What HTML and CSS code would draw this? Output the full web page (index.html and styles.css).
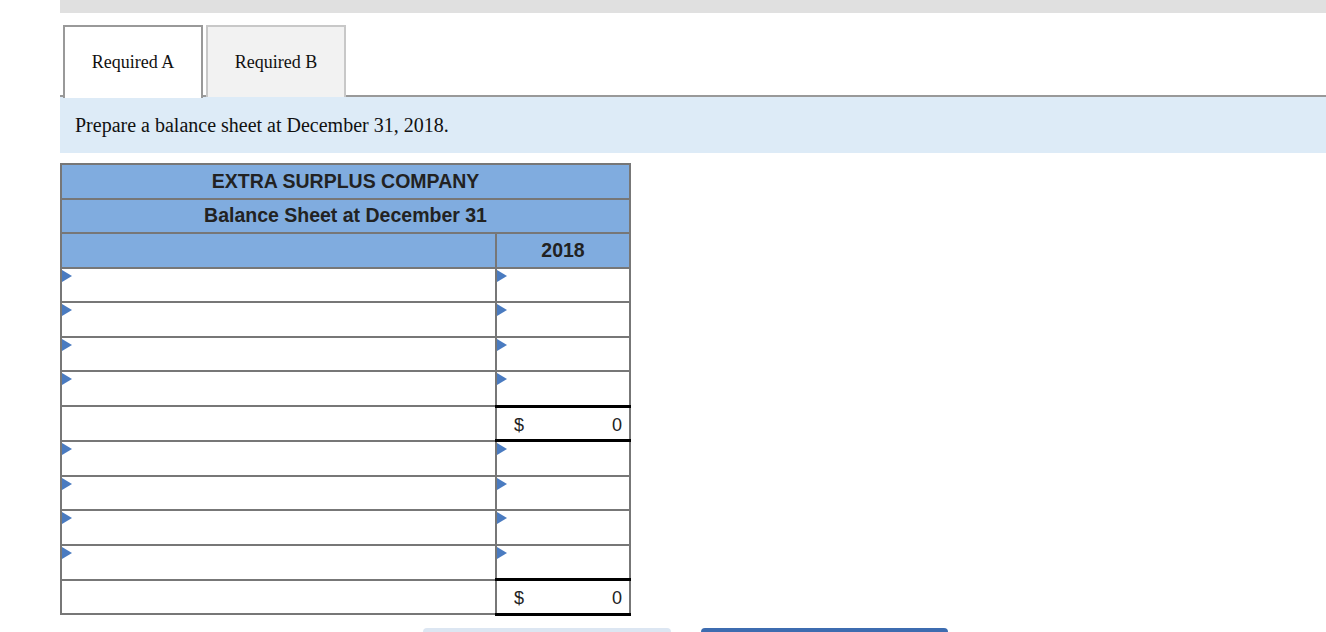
FILE: index.html
```html
<!DOCTYPE html>
<html>
<head>
<title>Balance Sheet</title>
<link rel="stylesheet" href="styles.css">
</head>
<body>

<div class="topbar"></div>

<div class="tabs">
	<div class="tab active">Required A</div>
	<div class="tab">Required B</div>
</div>

<div class="instr">Prepare a balance sheet at December 31, 2018.</div>

<table class="sheet">
<colgroup><col class="c1"><col class="c2"></colgroup>
<tr class="head"><td colspan="2">EXTRA SURPLUS COMPANY</td></tr>
<tr class="head"><td colspan="2">Balance Sheet at December 31</td></tr>
<tr class="head"><td></td><td class="yr">2018</td></tr>

<tr><td><span class="tri"></span></td><td><span class="tri"></span></td></tr>
<tr><td><span class="tri"></span></td><td><span class="tri"></span></td></tr>
<tr><td><span class="tri"></span></td><td><span class="tri"></span></td></tr>
<tr><td><span class="tri"></span></td><td><span class="tri"></span></td></tr>
<tr><td></td><td class="total"><span class="cur">$</span><span class="val">0</span></td></tr>
<tr><td><span class="tri"></span></td><td><span class="tri"></span></td></tr>
<tr><td><span class="tri"></span></td><td><span class="tri"></span></td></tr>
<tr><td><span class="tri"></span></td><td><span class="tri"></span></td></tr>
<tr><td><span class="tri"></span></td><td><span class="tri"></span></td></tr>
<tr><td></td><td class="total"><span class="cur">$</span><span class="val">0</span></td></tr>
</table>

<div class="nav">
	<button class="prev"></button>
	<button class="next"></button>
</div>

</body>
</html>
```

FILE: styles.css
```css
body { margin: 0; padding-left: 60px; background: #fff; font-family: "Liberation Serif", "Times New Roman", serif; overflow: hidden; }

.topbar { height: 13px; background-color: #e0e0e0; }

.tabs { display: flex; gap: 3px; margin-top: 12px; padding-left: 3px; border-bottom: 2px solid #999; height: 70px; }
.tab { width: 136px; height: 70px; border: 2px solid #c8c8c8; border-bottom: none;
	   background-color: #f2f2f2; font-size: 18px; color: #111;
	   display: flex; align-items: center; justify-content: center; box-sizing: content-box; }
.tab.active { background-color: #fff; border-color: #999; height: 71px; position: relative; z-index: 1; }

.instr { background-color: #ddebf7; height: 56px; padding-left: 15px; font-size: 20px; color: #111;
		 display: flex; align-items: center; padding-top: 1px; box-sizing: border-box; }

table.sheet { margin-top: 10px; border-collapse: collapse; table-layout: fixed; width: 569px;
			  font-family: "Liberation Sans", Arial, sans-serif; color: #222; }
col.c1 { width: 435px; }
col.c2 { width: 134px; }
table.sheet td { border: 2px solid #777; height: 32.5px; padding: 0; position: relative; }
tr.head td { background-color: #80acdf; text-align: center; font-weight: bold; font-size: 19.5px; }
td.yr { padding-top: 2px; }

table.sheet td.total { border-top: 3px solid #000; border-bottom: 3px solid #000; font-size: 18px; height: 31.5px; }
.cur { position: absolute; left: 17px; top: 7px; }
.val { position: absolute; right: 7px; top: 7px; }

.tri { position: absolute; left: 0; top: 1px; width: 0; height: 0;
	   border-left: 10px solid #4a7bc0; border-top: 6px solid transparent; border-bottom: 6px solid transparent; }

.nav { display: flex; gap: 30px; margin-top: 12px; padding-left: 363px; }
.nav button { width: 248px; height: 30px; border: none; border-radius: 4px 4px 0 0; }
.nav .prev { background-color: #dce6f2; }
.nav .next { background-color: #3d6cb0; width: 247px; }
```
